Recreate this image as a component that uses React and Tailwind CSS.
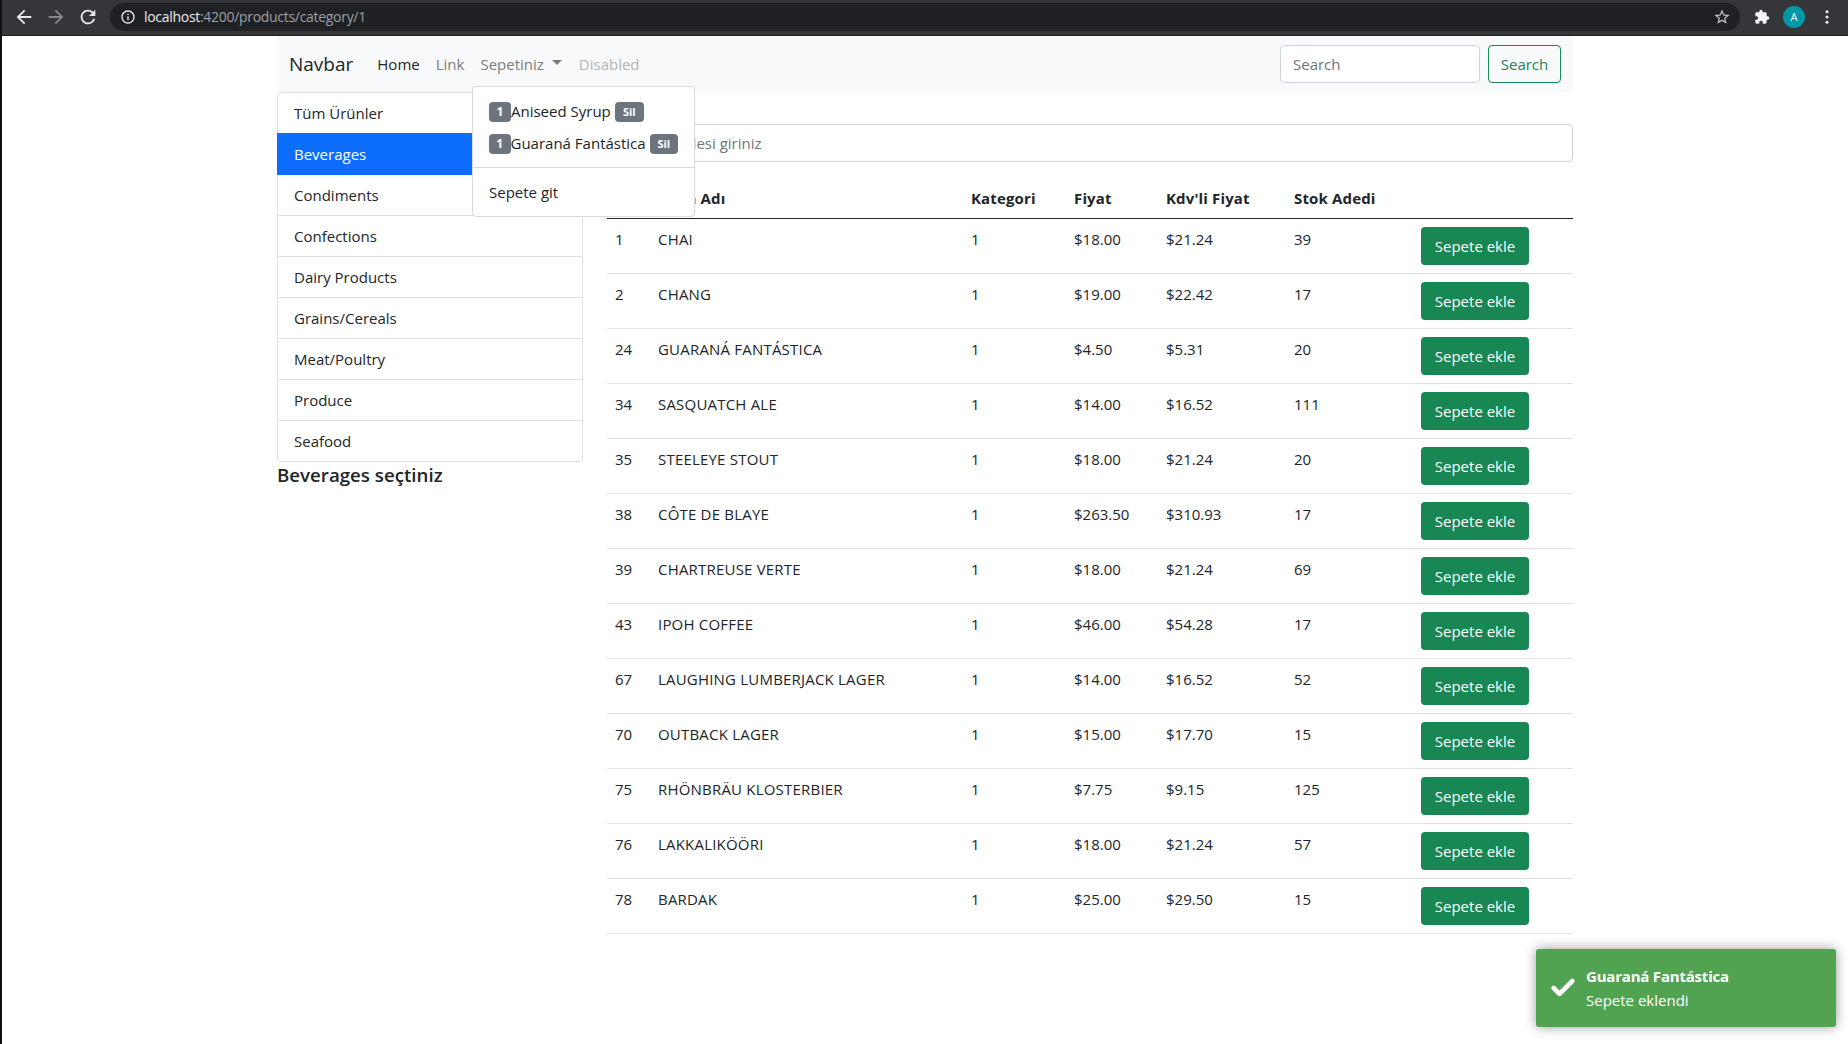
import { Check } from 'lucide-react';

const categories = ['Tüm Ürünler', 'Beverages', 'Condiments', 'Confections', 'Dairy Products', 'Grains/Cereals', 'Meat/Poultry', 'Produce', 'Seafood'];

const products = [
    [1, 'CHAI', '$18.00', '$21.24', 39],
    [2, 'CHANG', '$19.00', '$22.42', 17],
    [24, 'GUARANÁ FANTÁSTICA', '$4.50', '$5.31', 20],
    [34, 'SASQUATCH ALE', '$14.00', '$16.52', 111],
    [35, 'STEELEYE STOUT', '$18.00', '$21.24', 20],
    [38, 'CÔTE DE BLAYE', '$263.50', '$310.93', 17],
    [39, 'CHARTREUSE VERTE', '$18.00', '$21.24', 69],
    [43, 'IPOH COFFEE', '$46.00', '$54.28', 17],
    [67, 'LAUGHING LUMBERJACK LAGER', '$14.00', '$16.52', 52],
    [70, 'OUTBACK LAGER', '$15.00', '$17.70', 15],
    [75, 'RHÖNBRÄU KLOSTERBIER', '$7.75', '$9.15', 125],
    [76, 'LAKKALIKÖÖRI', '$18.00', '$21.24', 57],
    [78, 'BARDAK', '$25.00', '$29.50', 15],
];

function ChromeIcon({ d, size, className }) {
    return (
        <svg width={size} height={size} viewBox="0 0 24 24" fill="currentColor" className={className}>
            <path d={d} />
        </svg>
    );
}

function BrowserBar() {
    return (
        <div className="h-[36px] bg-[#35363a] flex items-center pb-px text-white border-b border-[#1f1f22]">
            <ChromeIcon size={22} className="ml-[11px] text-[#e8eaed]" d="M20 11H7.83l5.59-5.59L12 4l-8 8 8 8 1.41-1.41L7.83 13H20v-2z" />
            <ChromeIcon size={22} className="ml-[10px] text-[#85878a]" d="M12 4l-1.41 1.41L16.17 11H4v2h12.17l-5.58 5.59L12 20l8-8z" />
            <ChromeIcon size={22} className="ml-[10px] text-[#e8eaed]" d="M17.65 6.35A7.958 7.958 0 0 0 12 4c-4.42 0-7.99 3.58-7.99 8s3.57 8 7.99 8c3.73 0 6.84-2.55 7.73-6h-2.08A5.99 5.99 0 0 1 12 18c-3.31 0-6-2.69-6-6s2.69-6 6-6c1.66 0 3.14.69 4.22 1.78L13 11h7V4l-2.35 2.35z" />
            <div className="ml-[11px] w-[1630px] h-[28px] rounded-full bg-[#202124] flex items-center">
                <ChromeIcon size={16} className="ml-[10px] text-[#e8eaed]" d="M11 7h2v2h-2zm0 4h2v6h-2zm1-9C6.48 2 2 6.48 2 12s4.48 10 10 10 10-4.48 10-10S17.52 2 12 2zm0 18c-4.41 0-8-3.59-8-8s3.59-8 8-8 8 3.59 8 8-3.59 8-8 8z" />
                <span className="ml-[8px] text-[14px] tracking-[-0.3px] text-[#e8eaed]">localhost<span className="text-[#9aa0a6]">:4200/products/category/1</span></span>
                <ChromeIcon size={18} className="ml-auto mr-[9px] text-[#c4c7c5]" d="M22 9.24l-7.19-.62L12 2 9.19 8.63 2 9.24l5.46 4.73L5.82 21 12 17.27 18.18 21l-1.63-7.03L22 9.24zM12 15.4l-3.76 2.27 1-4.28-3.32-2.88 4.38-.38L12 6.1l1.71 4.04 4.38.38-3.32 2.88 1 4.28L12 15.4z" />
            </div>
            <ChromeIcon size={16} className="ml-[14px] text-[#f1f3f4]" d="M20.5 11H19V7c0-1.1-.9-2-2-2h-4V3.5C13 2.12 11.88 1 10.5 1S8 2.12 8 3.5V5H4c-1.1 0-1.99.9-1.99 2v3.8H3.5c1.49 0 2.7 1.21 2.7 2.7s-1.21 2.7-2.7 2.7H2V20c0 1.1.9 2 2 2h3.8v-1.5c0-1.49 1.21-2.7 2.7-2.7 1.49 0 2.7 1.21 2.7 2.7V22H17c1.1 0 2-.9 2-2v-4h1.5c1.38 0 2.5-1.12 2.5-2.5S21.88 11 20.5 11z" />
            <div className="ml-[13px] w-[22px] h-[22px] rounded-full bg-[#0097a7] flex items-center justify-center text-[11px]">A</div>
            <svg width="16" height="16" viewBox="0 0 16 16" fill="#e8eaed" className="ml-[14px]">
                <circle cx="8" cy="2.7" r="1.5" />
                <circle cx="8" cy="8" r="1.5" />
                <circle cx="8" cy="13.3" r="1.5" />
            </svg>
        </div>
    );
}

function Navbar() {
    return (
        <nav className="relative h-[56px] bg-[#f8f9fa] flex items-center pl-[12px] pr-[12px]">
            <span className="text-[19px] text-[#212529] mr-[24px]">Navbar</span>
            <span className="text-[#212529] mr-[16px]">Home</span>
            <span className="text-[#7b7d80] mr-[16px]">Link</span>
            <span className="text-[#7b7d80] mr-[17px] flex items-center">
                Sepetiniz
                <span className="ml-[8px] mb-[3px] border-x-[5px] border-x-transparent border-t-[5px] border-t-[#7b7d80]" />
            </span>
            <span className="text-[#b4b6b8]">Disabled</span>
            <div className="ml-auto flex gap-[8px]">
                <div className="w-[200px] h-[38px] bg-white border border-[#ced4da] rounded-[4px] flex items-center px-[12px] text-[#6c757d]">Search</div>
                <button className="w-[73px] h-[38px] border border-[#198754] rounded-[4px] text-[#198754]">Search</button>
            </div>
            <CartMenu />
        </nav>
    );
}

function CartRow({ name }) {
    return (
        <div className="h-[32px] flex items-center px-[16px] whitespace-nowrap text-[#212529]">
            <span className="w-[22px] h-[20px] rounded-[4px] bg-[#6c757d] text-white text-[12px] font-bold flex items-center justify-center">1</span>
            <span className="mb-[2px]">{name}</span>
            <span className="ml-[4px] w-[29px] h-[20px] rounded-[4px] bg-[#6c757d] text-white text-[11px] font-bold flex items-center justify-center">Sil</span>
        </div>
    );
}

function CartMenu() {
    return (
        <div className="absolute z-10 left-[195px] top-[50px] w-[223px] h-[131px] bg-white border border-[#d9d9d9] rounded-[4px] pt-[9px]">
            <CartRow name="Aniseed Syrup" />
            <CartRow name="Guaraná Fantástica" />
            <div className="mt-[7px] border-t border-[#d9d9d9]" />
            <div className="px-[16px] mt-[8px] h-[32px] flex items-center text-[#212529]">Sepete git</div>
        </div>
    );
}

function CategoryList() {
    return (
        <div className="w-[306px]">
            <div className="flex flex-col">
                {categories.map((c, i) => (
                    <div
                        key={c}
                        className={
                            c === 'Beverages'
                                ? 'relative h-[42px] -mt-px px-[16px] flex items-center bg-[#0d6efd] border border-[#0d6efd] text-white'
                                : i === 0
                                    ? 'h-[42px] px-[16px] flex items-center text-[#212529] border border-[#dfdfdf] rounded-t-[4px]'
                                    : 'h-[42px] -mt-px px-[16px] flex items-center text-[#212529] border border-[#dfdfdf] last:rounded-b-[4px]'
                        }
                    >
                        {c}
                    </div>
                ))}
            </div>
            <h5 className="text-[18.7px] font-semibold text-[#212529] leading-[24px] mt-[1px]">Beverages seçtiniz</h5>
        </div>
    );
}

function ProductTable() {
    return (
        <div className="w-[966px] ml-[24px]">
            <div className="mt-[32px] h-[38px] border border-[#ced4da] rounded-[4px] flex items-center px-[12px] text-[#6c757d]">Arama ifadesi giriniz</div>
            <table className="mt-[16px] w-full table-fixed border-collapse text-[#212529]">
                <thead>
                    <tr className="h-[40px] border-b border-[#212529] font-bold text-left tracking-[0.15px]">
                        <th className="w-[43px] px-[8px]">#</th>
                        <th className="w-[313px] px-[8px]">Ürün Adı</th>
                        <th className="w-[103px] px-[8px]">Kategori</th>
                        <th className="w-[92px] px-[8px]">Fiyat</th>
                        <th className="w-[128px] px-[8px]">Kdv'li Fiyat</th>
                        <th className="w-[127px] px-[8px]">Stok Adedi</th>
                        <th></th>
                    </tr>
                </thead>
                <tbody>
                    {products.map((p) => (
                        <tr key={p[0]} className="h-[55px] border-b border-[#dee2e6] align-top">
                            <td className="px-[8px] pt-[8px]">{p[0]}</td>
                            <td className="px-[8px] pt-[8px] tracking-[0.2px]">{p[1]}</td>
                            <td className="px-[8px] pt-[8px]">1</td>
                            <td className="px-[8px] pt-[8px]">{p[2]}</td>
                            <td className="px-[8px] pt-[8px]">{p[3]}</td>
                            <td className="px-[8px] pt-[8px]">{p[4]}</td>
                            <td className="px-[8px] pt-[8px]">
                                <button className="w-[108px] h-[38px] bg-[#198754] text-white rounded-[4px]">Sepete ekle</button>
                            </td>
                        </tr>
                    ))}
                </tbody>
            </table>
        </div>
    );
}

export default function App() {
    return (
        <div className="relative h-[1044px] bg-white overflow-hidden flex text-[15px] leading-[24px] font-['Open_Sans',sans-serif]">
            <div className="w-[2px] bg-[#111111]" />
            <div className="flex-1">
                <BrowserBar />
                <div className="w-[1296px] ml-[275px]">
                    <Navbar />
                    <div className="flex">
                        <CategoryList />
                        <ProductTable />
                    </div>
                </div>
            </div>
            <div className="absolute left-[1536px] top-[949px] w-[300px] h-[78px] bg-[#51a351] rounded-[3px] shadow-[0_0_12px_#999] text-white flex items-center">
                <Check size={28} strokeWidth={4} className="ml-[13px]" />
                <div className="ml-[9px]">
                    <div className="font-bold leading-[24px] tracking-[-0.2px]">Guaraná Fantástica</div>
                    <div className="leading-[24px]">Sepete eklendi</div>
                </div>
            </div>
        </div>
    );
}
